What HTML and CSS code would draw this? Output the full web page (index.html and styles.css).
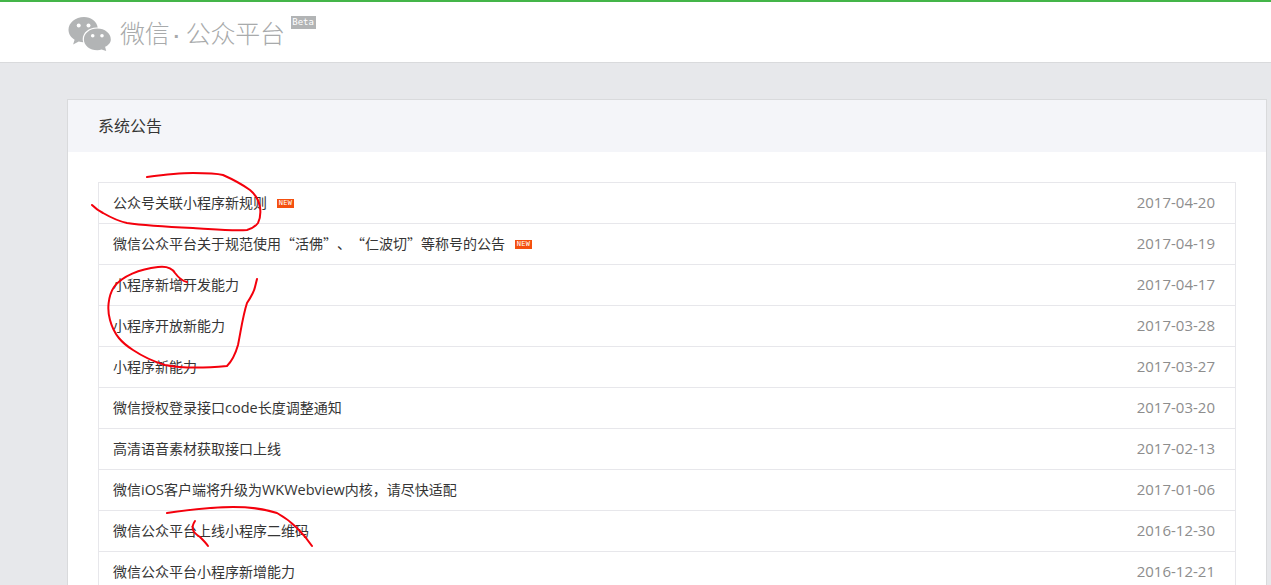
FILE: index.html
```html
<!DOCTYPE html>
<html lang="zh">
<head>
<meta charset="utf-8">
<title>系统公告</title>
<link rel="stylesheet" href="styles.css">
</head>
<body>
<header class="top">
  <div class="brand">
    <svg class="logo" width="44" height="34" viewBox="0 0 44 34">
      <path fill="#b2b4b5" d="M16 0C7.4 0 .5 5.700.5 12.800c0 4.200 2.400 7.700 6.100 10l-1.500 4.800 5.700-3c1.400.4 3 .6 4.400.7-.3-1-.5-2-.5-3.100 0-6.700 6.100-11.800 13.700-11.800h1.300C28.900 4.300 23 0 16 0z"/>
      <path fill="#b2b4b5" d="M29.300 11.600c-7.400 0-13.400 4.800-13.400 10.800s6 10.800 13.400 10.800c1.500 0 3-.2 4.300-.6l4.600 1.400-1.100-4.200c3.500-2 5.700-3.900 5.700-7.400 0-6-6-10.800-13.500-10.800z"/>
      <circle cx="10.700" cy="8.600" r="2" fill="#fff"/><circle cx="20.500" cy="8.600" r="2" fill="#fff"/>
      <circle cx="24.700" cy="18.800" r="1.800" fill="#fff"/><circle cx="34" cy="18.800" r="1.800" fill="#fff"/>
    </svg>
    <span class="brand-name">微信<span class="dot">·</span>公众平台</span>
    <span class="beta">Beta</span>
  </div>
</header>
<main class="card">
  <h2 class="card-title">系统公告</h2>
  <ul class="list">
    <li class="row"><span class="name">公众号关联小程序新规则<span class="new">NEW</span></span><span class="date">2017-04-20</span></li>
    <li class="row"><span class="name">微信公众平台关于规范使用“活佛”、“仁波切”等称号的公告<span class="new">NEW</span></span><span class="date">2017-04-19</span></li>
    <li class="row"><span class="name">小程序新增开发能力</span><span class="date">2017-04-17</span></li>
    <li class="row"><span class="name">小程序开放新能力</span><span class="date">2017-03-28</span></li>
    <li class="row"><span class="name">小程序新能力</span><span class="date">2017-03-27</span></li>
    <li class="row"><span class="name">微信授权登录接口<span class="lat">code</span>长度调整通知</span><span class="date">2017-03-20</span></li>
    <li class="row"><span class="name">高清语音素材获取接口上线</span><span class="date">2017-02-13</span></li>
    <li class="row"><span class="name">微信<span class="lat">iOS</span>客户端将升级为<span class="lat">WKWebview</span>内核，请尽快适配</span><span class="date">2017-01-06</span></li>
    <li class="row"><span class="name">微信公众平台上线小程序二维码</span><span class="date">2016-12-30</span></li>
    <li class="row"><span class="name">微信公众平台小程序新增能力</span><span class="date">2016-12-21</span></li>
  </ul>
</main>
<svg class="ink" width="1271" height="585" viewBox="0 0 1271 585" fill="none" stroke="#f4000c" stroke-width="2" stroke-linecap="round" stroke-linejoin="round">
  <path d="M147 177C162 175 178 173 193 173C205 173 215 173 223 175C232 179 243 185 250 190C256 195 259 201 260 207C261 214 260 219 258 223C255 227 251 229 247 230C230 231 212 229 193 228C170 227 147 226 127 223C117 221 110 217 103 213C99 211 95 208 92 205"/>
  <path d="M187 282C182 281 178 277 175 273C172 268 166 266 158 267C140 269 122 276 114 287C108 296 107 310 110 320C114 335 122 343 133 350C145 358 155 362 165 365C180 368 205 368 227 366C233 360 236 352 238 345C241 330 243 315 247 303C251 297 254 292 255 287L257 279"/>
  <path d="M167 513C188 510 210 507 233 507C250 507 265 509 277 513C286 518 292 523 297 528C303 534 308 540 312 546"/>
  <path d="M195 521C193 524 192 527 193 530C194 533 197 535 200 537C203 540 206 543 208 546"/>
</svg>
</body>
</html>
```
FILE: styles.css
```css
* { box-sizing: border-box; }
html, body { margin: 0; padding: 0; }
body {
  position: relative;
  height: 585px;
  overflow: hidden;
  background: #e7e8eb;
  font-family: "Noto Sans CJK SC", "Open Sans", sans-serif;
  font-size: 14px;
  color: #353535;
  text-spacing-trim: space-all;
}
.top {
  height: 63px;
  background: #fff;
  border-top: 2px solid #44b549;
  border-bottom: 1px solid #d9dadc;
  padding-left: 68px;
}
.brand { display: flex; align-items: flex-start; }
.logo { margin-top: 15px; }
.brand-name {
  margin: 10px 0 0 8px;
  font-size: 25px;
  line-height: 40px;
  font-weight: 300;
  letter-spacing: -.3px;
  color: #a8aaab;
  white-space: nowrap;
}
.dot { font-family: "Liberation Sans", sans-serif; margin: 0 6px 0 4px; font-weight: 700; font-size: 20px; }
.beta {
  margin: 14px 0 0 6px;
  width: 25px;
  height: 13px;
  background: #b2b4b5;
  color: #fff;
  font-family: "DejaVu Sans Mono", monospace;
  font-size: 9px;
  line-height: 13px;
  text-align: center;
}
.card {
  margin: 36px 4px 0 67px;
  background: #fff;
  border: 1px solid #d9dadc;
  border-bottom: 0;
  padding-bottom: 20px;
}
.card-title {
  margin: 0;
  height: 52px;
  padding-left: 30px;
  background: #f4f5f9;
  font-size: 16px;
  font-weight: 400;
  line-height: 50px;
  color: #353535;
}
.list {
  list-style: none;
  margin: 30px 30px 0;
  padding: 0;
  border: 1px solid #e7e7eb;
  border-bottom: 0;
}
.row {
  display: flex;
  justify-content: space-between;
  align-items: center;
  height: 41px;
  padding: 0 20px 2px 14px;
  border-bottom: 1px solid #e7e7eb;
  white-space: nowrap;
}
.name { display: flex; align-items: center; }
.lat { font-family: "Open Sans", sans-serif; font-size: 14.5px; }
.new {
  margin: 2px 0 0 10px;
  width: 17px;
  height: 9px;
  background: #f4500f;
  color: #fff;
  font-family: "DejaVu Sans Mono", monospace;
  font-size: 7px;
  line-height: 9px;
  letter-spacing: .3px;
  text-align: center;
  overflow: hidden;
}
.date { color: #8d8d8d; font-family: "Open Sans", sans-serif; font-size: 15px; }
.ink { position: absolute; left: 0; top: 0; pointer-events: none; }
```
